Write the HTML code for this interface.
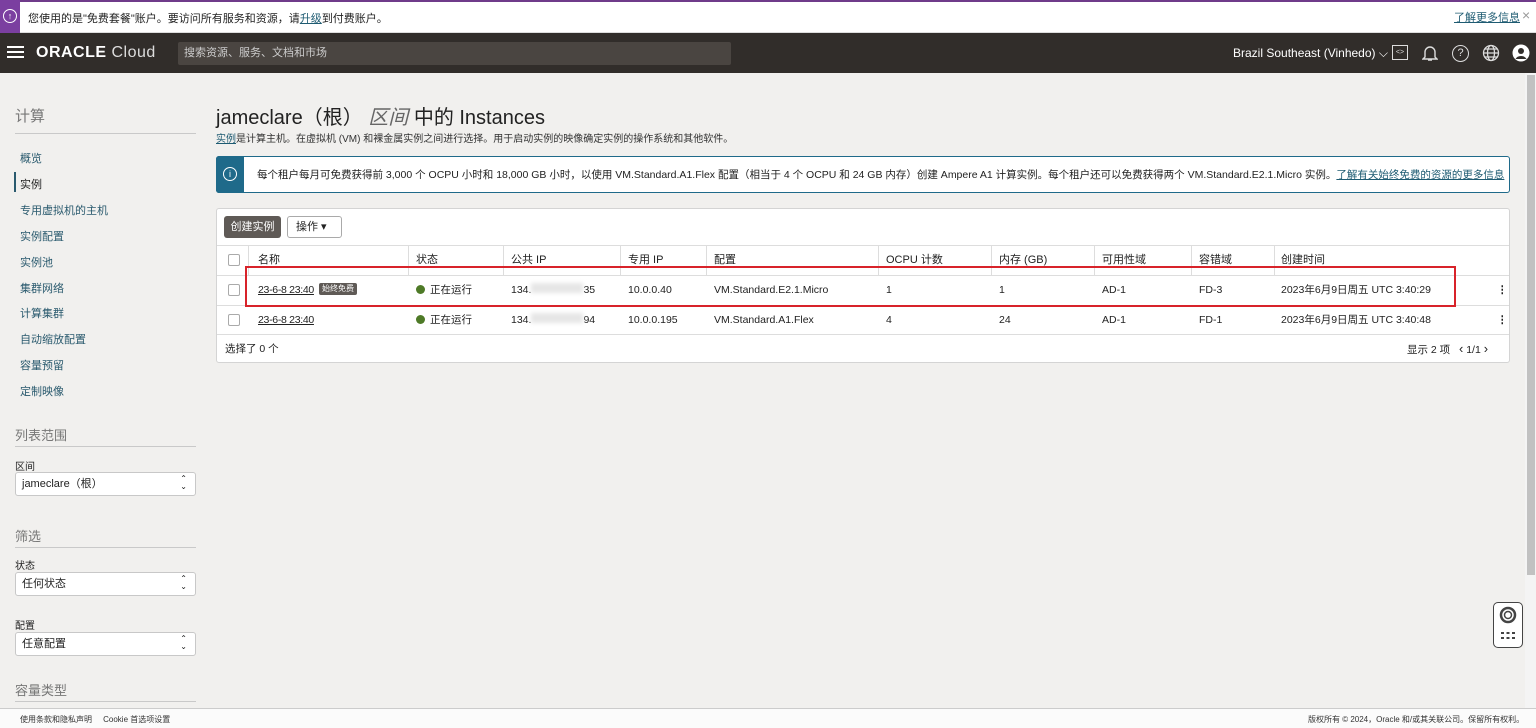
<!DOCTYPE html>
<html><head><meta charset="utf-8">
<style>
*{box-sizing:border-box;margin:0;padding:0}
body{width:1536px;height:728px;overflow:hidden;background:#f1f0ee;font-family:"Liberation Sans","Noto Sans CJK SC",sans-serif;color:#222;font-size:11px;position:relative}
.a{position:absolute}
.lnk{color:#1e5b72;text-decoration:underline}
.nav div{position:absolute;left:20px;font-size:11px;color:#2a5a6e}
.th{position:absolute;top:253px;font-size:11px;line-height:14px;color:#222}
.td{position:absolute;font-size:10.5px;line-height:14px;color:#222;white-space:nowrap}
.vl{position:absolute;top:245px;height:30px;width:1px;background:#ddd}
.cb{position:absolute;left:228px;width:12px;height:12px;border:1px solid #aaa;background:#fff;border-radius:2px}
.sel{position:absolute;left:15px;width:181px;height:24px;background:#fff;border:1px solid #c8c8c8;border-radius:3px;font-size:11px;line-height:14px;padding:4px 6px}
.sel:after{content:"⌃\A⌄";white-space:pre;position:absolute;right:8px;top:2px;font-size:8px;line-height:8px}
.lbl{position:absolute;left:15px;font-size:10px;color:#222}
.h{position:absolute;left:15px;font-size:13px;color:#777}
.hr{position:absolute;left:15px;width:181px;height:1px;background:#c9c9c9}
</style></head><body>
<div class="a" style="left:0;top:0;width:1536px;height:33px;background:#fff;border-top:2px solid #6f3b8a;border-bottom:1px solid #ddd"></div>
<div class="a" style="left:0;top:0;width:20px;height:33px;background:#7b3fa0"></div>
<div class="a" style="left:3px;top:9px;width:14px;height:14px;border:1px solid #fff;border-radius:50%;color:#fff;font-size:9px;text-align:center;line-height:12px">↑</div>
<div class="a" style="left:28px;top:10px;font-size:11px">您使用的是"免费套餐"账户。要访问所有服务和资源，请<span class="lnk">升级</span>到付费账户。</div>
<div class="a lnk" style="left:1454px;top:9px;font-size:11px">了解更多信息</div>
<div class="a" style="left:1522px;top:7px;font-size:14px;color:#999">×</div>
<div class="a" style="left:0;top:33px;width:1536px;height:40px;background:#312d2a"></div>
<div class="a" style="left:7px;top:46px;width:17px;height:2px;background:#fff;box-shadow:0 5px 0 #fff,0 10px 0 #fff"></div>
<div class="a" style="left:36px;top:44px;color:#fff;font-size:16px;letter-spacing:0.5px;font-weight:bold">ORACLE <span style="font-size:16px;color:#ddd;font-weight:normal">Cloud</span></div>
<div class="a" style="left:178px;top:42px;width:553px;height:23px;background:#4a4541;border-radius:2px;color:#ccc;font-size:11px;padding:5px 6px;line-height:13px">搜索资源、服务、文档和市场</div>
<div class="a" style="left:1233px;top:46px;color:#fff;font-size:12px">Brazil Southeast (Vinhedo) ⌵</div>
<div class="a" style="left:1392px;top:45px;width:16px;height:15px;border:1.5px solid #ddd;color:#ddd;font-size:7px;text-align:center;line-height:14px">&lt;&gt;</div>
<svg class="a" style="left:1422px;top:44px" width="16" height="18" viewBox="0 0 16 18"><path d="M3 13V8a5 5 0 0 1 10 0v5l2 2H1z M6 16h4" fill="none" stroke="#ddd" stroke-width="1.4"/></svg>
<div class="a" style="left:1452px;top:45px;width:17px;height:17px;border:1.5px solid #ddd;border-radius:50%;color:#ddd;font-size:11px;text-align:center;line-height:14px">?</div>
<svg class="a" style="left:1482px;top:44px" width="18" height="18" viewBox="0 0 18 18"><g fill="none" stroke="#ddd" stroke-width="1.3"><circle cx="9" cy="9" r="7.5"/><ellipse cx="9" cy="9" rx="3.5" ry="7.5"/><path d="M1.5 9h15M3 5h12M3 13h12"/></g></svg>
<svg class="a" style="left:1512px;top:44px" width="18" height="18" viewBox="0 0 18 18"><circle cx="9" cy="9" r="8.5" fill="#fff"/><circle cx="9" cy="7" r="3" fill="#312d2a"/><path d="M3.5 15a6 5 0 0 1 11 0" fill="#312d2a"/></svg>
<div class="a" style="left:1525px;top:73px;width:11px;height:635px;background:#f4f4f4"></div>
<div class="a" style="left:1527px;top:75px;width:8px;height:500px;background:#c1c1c1"></div>
<div class="a" style="left:15px;top:105px;font-size:15px;color:#777">计算</div>
<div class="hr" style="top:133px"></div>
<div class="nav">
<div style="top:150px">概览</div>
<div style="top:176px;color:#222">实例</div>
<div style="top:202px">专用虚拟机的主机</div>
<div style="top:228px">实例配置</div>
<div style="top:254px">实例池</div>
<div style="top:280px">集群网络</div>
<div style="top:305px">计算集群</div>
<div style="top:331px">自动缩放配置</div>
<div style="top:357px">容量预留</div>
<div style="top:383px">定制映像</div>
</div>
<div class="a" style="left:14px;top:172px;width:2px;height:20px;background:#2a5a6e"></div>
<div class="h" style="top:425px">列表范围</div>
<div class="hr" style="top:446px"></div>
<div class="lbl" style="top:458px">区间</div>
<div class="sel" style="top:472px">jameclare（根）</div>
<div class="h" style="top:526px">筛选</div>
<div class="hr" style="top:547px"></div>
<div class="lbl" style="top:557px">状态</div>
<div class="sel" style="top:572px">任何状态</div>
<div class="lbl" style="top:617px">配置</div>
<div class="sel" style="top:632px">任意配置</div>
<div class="h" style="top:680px">容量类型</div>
<div class="hr" style="top:701px"></div>
<div class="a" style="left:0;top:708px;width:1536px;height:20px;background:#fbfbfb;border-top:1px solid #ccc"></div>
<div class="a" style="left:20px;top:714px;font-size:8px;color:#333">使用条款和隐私声明 &nbsp;&nbsp;&nbsp; Cookie 首选项设置</div>
<div class="a" style="left:1308px;top:714px;font-size:8px;color:#333">版权所有 © 2024，Oracle 和/或其关联公司。保留所有权利。</div>
<div class="a" style="left:1493px;top:602px;width:30px;height:46px;border:1.5px solid #444;border-radius:5px;background:#fff"></div>
<svg class="a" style="left:1498px;top:606px" width="20" height="38" viewBox="0 0 20 38"><circle cx="10" cy="9" r="7" fill="none" stroke="#444" stroke-width="2.5"/><circle cx="10" cy="9" r="3.5" fill="none" stroke="#444" stroke-width="1.5"/><g fill="#444"><rect x="3" y="26" width="3" height="2"/><rect x="8.5" y="26" width="3" height="2"/><rect x="14" y="26" width="3" height="2"/><rect x="3" y="31" width="3" height="2"/><rect x="8.5" y="31" width="3" height="2"/><rect x="14" y="31" width="3" height="2"/></g></svg>
<div class="a" style="left:216px;top:101px;font-size:20px;color:#222">jameclare（根） <i style="color:#666">区间</i> 中的 Instances</div>
<div class="a" style="left:216px;top:130px;font-size:10px;color:#333"><span class="lnk">实例</span>是计算主机。在虚拟机 (VM) 和裸金属实例之间进行选择。用于启动实例的映像确定实例的操作系统和其他软件。</div>
<div class="a" style="left:216px;top:156px;width:1294px;height:37px;background:#fff;border:1px solid #1f6a8a;border-radius:3px"></div>
<div class="a" style="left:216px;top:156px;width:28px;height:37px;background:#1f6a8a;border-radius:3px 0 0 3px"></div>
<div class="a" style="left:223px;top:167px;width:14px;height:14px;border:1.2px solid #fff;border-radius:50%;color:#fff;font-size:9px;text-align:center;line-height:12px">i</div>
<div class="a" style="left:257px;top:167px;font-size:10.5px;color:#222;white-space:nowrap">每个租户每月可免费获得前 3,000 个 OCPU 小时和 18,000 GB 小时，以使用 VM.Standard.A1.Flex 配置（相当于 4 个 OCPU 和 24 GB 内存）创建 Ampere A1 计算实例。每个租户还可以免费获得两个 VM.Standard.E2.1.Micro 实例。<span class="lnk">了解有关始终免费的资源的更多信息</span></div>
<div class="a" style="left:216px;top:208px;width:1294px;height:155px;background:#fff;border:1px solid #d4d4d4;border-radius:3px"></div>
<div class="a" style="left:224px;top:216px;width:57px;height:22px;background:#5f5a56;border-radius:3px;color:#fff;font-size:11px;text-align:center;line-height:22px">创建实例</div>
<div class="a" style="left:287px;top:216px;width:55px;height:22px;background:#fff;border:1px solid #aaa;border-radius:3px;font-size:11px;padding-left:8px;line-height:20px">操作 ▾</div>
<div class="a" style="left:217px;top:245px;width:1292px;height:1px;background:#ddd"></div>
<div class="a" style="left:217px;top:275px;width:1292px;height:1px;background:#ddd"></div>
<div class="a" style="left:217px;top:305px;width:1292px;height:1px;background:#ddd"></div>
<div class="a" style="left:217px;top:334px;width:1292px;height:1px;background:#ddd"></div>
<div class="vl" style="left:248px"></div><div class="vl" style="left:408px"></div><div class="vl" style="left:503px"></div><div class="vl" style="left:620px"></div><div class="vl" style="left:706px"></div><div class="vl" style="left:878px"></div><div class="vl" style="left:991px"></div><div class="vl" style="left:1094px"></div><div class="vl" style="left:1191px"></div><div class="vl" style="left:1274px"></div>
<div class="cb" style="top:254px"></div><div class="cb" style="top:284px"></div><div class="cb" style="top:314px"></div>
<div class="th" style="left:258px">名称</div><div class="th" style="left:416px">状态</div><div class="th" style="left:511px">公共 IP</div><div class="th" style="left:628px">专用 IP</div><div class="th" style="left:714px">配置</div><div class="th" style="left:886px">OCPU 计数</div><div class="th" style="left:999px">内存 (GB)</div><div class="th" style="left:1102px">可用性域</div><div class="th" style="left:1199px">容错域</div><div class="th" style="left:1281px">创建时间</div>
<div class="td lnk" style="left:258px;top:283px;letter-spacing:-0.3px">23-6-8 23:40</div>
<div class="td" style="left:319px;top:283px;background:#5f5a56;color:#fff;font-size:8px;line-height:12px;padding:0 3px;border-radius:2px">始终免费</div>
<div class="td" style="left:416px;top:283px"><span style="display:inline-block;width:9px;height:9px;border-radius:50%;background:#4e7a27;margin-right:5px;vertical-align:-1px"></span>正在运行</div>
<div class="td" style="left:511px;top:283px">134.<span style="display:inline-block;width:52px;height:10px;background:#e6e6e6;filter:blur(2px)"></span>35</div>
<div class="td" style="left:628px;top:283px">10.0.0.40</div><div class="td" style="left:714px;top:283px">VM.Standard.E2.1.Micro</div><div class="td" style="left:886px;top:283px">1</div><div class="td" style="left:999px;top:283px">1</div><div class="td" style="left:1102px;top:283px">AD-1</div><div class="td" style="left:1199px;top:283px">FD-3</div><div class="td" style="left:1281px;top:283px">2023年6月9日周五 UTC 3:40:29</div>
<div class="td" style="left:1497px;top:283px;font-weight:bold">⋮</div>
<div class="td lnk" style="left:258px;top:313px;letter-spacing:-0.3px">23-6-8 23:40</div>
<div class="td" style="left:416px;top:313px"><span style="display:inline-block;width:9px;height:9px;border-radius:50%;background:#4e7a27;margin-right:5px;vertical-align:-1px"></span>正在运行</div>
<div class="td" style="left:511px;top:313px">134.<span style="display:inline-block;width:52px;height:10px;background:#e6e6e6;filter:blur(2px)"></span>94</div>
<div class="td" style="left:628px;top:313px">10.0.0.195</div><div class="td" style="left:714px;top:313px">VM.Standard.A1.Flex</div><div class="td" style="left:886px;top:313px">4</div><div class="td" style="left:999px;top:313px">24</div><div class="td" style="left:1102px;top:313px">AD-1</div><div class="td" style="left:1199px;top:313px">FD-1</div><div class="td" style="left:1281px;top:313px">2023年6月9日周五 UTC 3:40:48</div>
<div class="td" style="left:1497px;top:313px;font-weight:bold">⋮</div>
<div class="td" style="left:225px;top:342px">选择了 0 个</div>
<div class="td" style="left:1407px;top:342px">显示 2 项 &nbsp;&nbsp;<span style="font-size:13px">‹</span> 1/1 <span style="font-size:13px">›</span></div>
<div class="a" style="left:245px;top:266px;width:1211px;height:41px;border:2px solid #d8232a"></div>
</body></html>
